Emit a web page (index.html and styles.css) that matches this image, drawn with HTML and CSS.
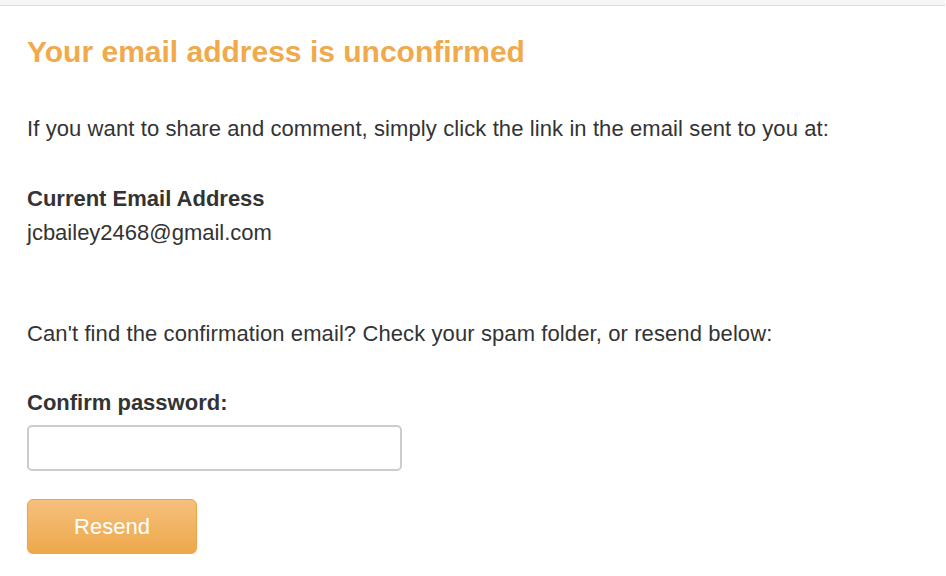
FILE: index.html
```html
<!DOCTYPE html>
<html>
<head>
<meta charset="utf-8">
<link rel="stylesheet" href="styles.css">
</head>
<body>
<div class="topbar"></div>
<main class="content">
  <h1 class="title">Your email address is unconfirmed</h1>
  <p class="intro">If you want to share and comment, simply click the link in the email sent to you at:</p>
  <div class="current">
    <div class="label">Current Email Address</div>
    <div class="email">jcbailey2468@gmail.com</div>
  </div>
  <p class="hint">Can't find the confirmation email? Check your spam folder, or resend below:</p>
  <form class="resend-form">
    <label class="label" for="pw">Confirm password:</label>
    <input id="pw" class="field" type="password">
    <button type="button" class="btn">Resend</button>
  </form>
</main>
</body>
</html>
```
FILE: styles.css
```css
* { box-sizing: border-box; }
html, body { margin: 0; padding: 0; background: #fff; }
body {
  font-family: "Liberation Sans", Arial, sans-serif;
  color: #333;
  font-size: 22px;
}
.topbar {
  height: 6px;
  background: #f5f5f5;
  border-bottom: 1px solid #ddd;
  margin-right: 1px;
}
.content {
  padding: 0 27px;
  display: flex;
  flex-direction: column;
}
.title {
  margin: 28px 0 0;
  font-size: 30px;
  line-height: 36px;
  color: #f0a94b;
  font-weight: bold;
}
.intro { margin: 45px 0 0; line-height: 28px; letter-spacing: 0.1px; }
.current { margin-top: 42px; display: flex; flex-direction: column; gap: 6px; }
.label { font-weight: bold; line-height: 28px; display: block; }
.email { line-height: 28px; }
.hint { margin: 73px 0 0; line-height: 28px; letter-spacing: 0.1px; }
.resend-form { margin-top: 41px; display: flex; flex-direction: column; align-items: flex-start; }
.field {
  margin-top: 8px;
  width: 375px;
  height: 46px;
  border: 2px solid #ccc;
  border-radius: 5px;
  background: #fff;
}
.btn {
  margin-top: 28px;
  width: 170px;
  height: 55px;
  border: 1px solid #eda74b;
  border-radius: 6px;
  background: linear-gradient(#f4c07d, #efa84a);
  color: #fff;
  font-family: "Liberation Sans", Arial, sans-serif;
  font-size: 22px;
  box-shadow: 0 1px 2px rgba(0,0,0,0.08);
}
```
